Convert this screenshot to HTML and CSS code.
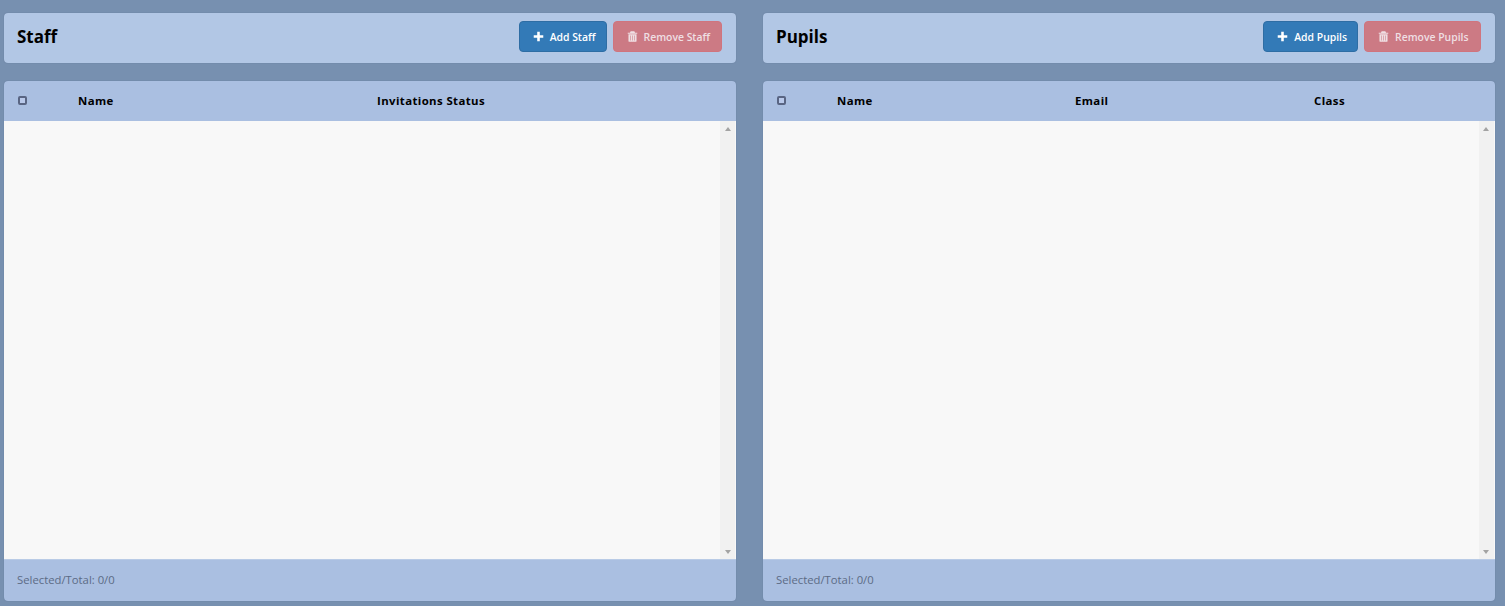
FILE: index.html
```html
<!DOCTYPE html>
<html lang="en">
<head>
<meta charset="utf-8">
<title>Staff and Pupils</title>
<link rel="stylesheet" href="styles.css">
</head>
<body>
<main class="page">
  <section class="column">
    <header class="topbar">
      <h2 class="title">Staff</h2>
      <div class="actions">
        <button class="btn btn-add" type="button">
          <svg class="icon" viewBox="0 0 12 12"><path d="M4.6 0.8h2.8v3.8h3.8v2.8H7.4v3.8H4.6V7.4H0.8V4.6h3.8z"/></svg>
          Add Staff
        </button>
        <button class="btn btn-remove" type="button">
          <svg class="icon" viewBox="0 0 12 12"><path fill-rule="evenodd" d="M4 0.4h4l0.8 1.4h2.4v1.2H0.8V1.8h2.4zM1.6 3.6h8.8v7.2q0 1-1 1H2.6q-1 0-1-1zM3.6 5v5.4h0.6V5zM5.7 5v5.4h0.6V5zM7.8 5v5.4h0.6V5z"/></svg>
          Remove Staff
        </button>
      </div>
    </header>
    <div class="table-card">
      <div class="thead thead-staff">
        <span class="check-cell"><span class="checkbox"></span></span>
        <span>Name</span>
        <span>Invitations Status</span>
      </div>
      <div class="tbody">
        <div class="rows"></div>
        <div class="scrollbar"><span class="arrow-up"></span><span class="arrow-down"></span></div>
      </div>
      <footer class="tfoot">Selected/Total: 0/0</footer>
    </div>
  </section>
  <section class="column">
    <header class="topbar">
      <h2 class="title">Pupils</h2>
      <div class="actions">
        <button class="btn btn-add" type="button">
          <svg class="icon" viewBox="0 0 12 12"><path d="M4.6 0.8h2.8v3.8h3.8v2.8H7.4v3.8H4.6V7.4H0.8V4.6h3.8z"/></svg>
          Add Pupils
        </button>
        <button class="btn btn-remove" type="button">
          <svg class="icon" viewBox="0 0 12 12"><path fill-rule="evenodd" d="M4 0.4h4l0.8 1.4h2.4v1.2H0.8V1.8h2.4zM1.6 3.6h8.8v7.2q0 1-1 1H2.6q-1 0-1-1zM3.6 5v5.4h0.6V5zM5.7 5v5.4h0.6V5zM7.8 5v5.4h0.6V5z"/></svg>
          Remove Pupils
        </button>
      </div>
    </header>
    <div class="table-card">
      <div class="thead thead-pupils">
        <span class="check-cell"><span class="checkbox"></span></span>
        <span>Name</span>
        <span>Email</span>
        <span>Class</span>
      </div>
      <div class="tbody">
        <div class="rows"></div>
        <div class="scrollbar"><span class="arrow-up"></span><span class="arrow-down"></span></div>
      </div>
      <footer class="tfoot">Selected/Total: 0/0</footer>
    </div>
  </section>
</main>
</body>
</html>
```
FILE: styles.css
```css
* { box-sizing: border-box; }
html, body { margin: 0; height: 100%; }
body {
  background: #7790b0;
  font-family: "Open Sans", "Liberation Sans", sans-serif;
  overflow: hidden;
}
.page {
  display: grid;
  grid-template-columns: 732px 731.5px;
  column-gap: 27px;
  padding: 13px 0 0 4px;
}
.column { display: flex; flex-direction: column; gap: 18px; }
.topbar {
  height: 50px;
  display: flex;
  align-items: flex-start;
  justify-content: space-between;
  padding: 8px 14px 0 13px;
  background: #b2c7e5;
  border-radius: 4px;
  box-shadow: 0 0 1px rgba(60, 80, 110, .5);
}
.title { margin: 0; font-size: 17px; font-weight: 700; color: #000; line-height: 31px; }
.actions { display: flex; gap: 6px; }
.btn {
  height: 31px;
  display: inline-flex;
  align-items: center;
  gap: 6px;
  padding: 0 10px 0 13px;
  border-radius: 4px;
  border: 1px solid;
  font: 600 10.4px "Open Sans", "Liberation Sans", sans-serif;
  color: #fff;
}
.btn-add { background: #337ab7; border-color: #2e6da4; }
.btn-remove { background: #cc7a84; border-color: #d0747e; color: #efdfe3; padding-right: 11px; }
.icon { width: 11px; height: 11px; fill: currentColor; flex: none; }
.table-card {
  height: 520px;
  display: flex;
  flex-direction: column;
  background: #aabfe1;
  border-radius: 4px;
  overflow: hidden;
  box-shadow: 0 0 1px rgba(60, 80, 110, .5);
}
.thead {
  height: 40px;
  flex: none;
  display: grid;
  align-items: center;
  padding-bottom: 1px;
  font-size: 11.4px;
  font-weight: 700;
  letter-spacing: .4px;
  color: #000;
}
.thead-staff { grid-template-columns: 74px 299px 1fr; }
.thead-pupils { grid-template-columns: 74px 238px 239px 1fr; }
.check-cell { display: flex; padding-left: 14px; }
.checkbox {
  width: 9px;
  height: 9px;
  border: 2px solid #596583;
  border-radius: 2px;
  background: #b9c9ea;
}
.tbody { flex: 1; display: flex; min-height: 0; background: #f8f8f8; }
.rows { flex: 1; }
.scrollbar {
  width: 15px;
  margin-right: 1px;
  background: #f1f1f1;
  display: flex;
  flex-direction: column;
  justify-content: space-between;
  align-items: center;
  padding: 6px 0 5px;
}
.arrow-up { border: 3.5px solid transparent; border-top: 0; border-bottom: 4px solid #a3a3a3; }
.arrow-down { border: 3.5px solid transparent; border-bottom: 0; border-top: 4px solid #a3a3a3; }
.tfoot {
  height: 42px;
  flex: none;
  display: flex;
  align-items: center;
  padding: 0 0 2px 13px;
  font-size: 11.3px;
  color: #5c6b85;
  border-top: 1px solid #b9cbe6;
}
```
